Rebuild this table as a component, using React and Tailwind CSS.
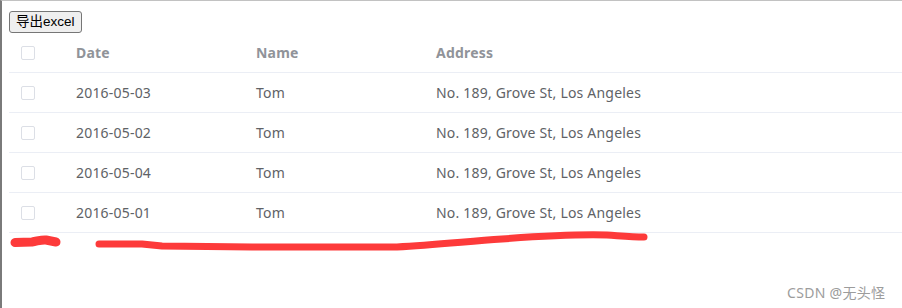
import React from "react";

const rows = [
  { date: "2016-05-03", name: "Tom", address: "No. 189, Grove St, Los Angeles" },
  { date: "2016-05-02", name: "Tom", address: "No. 189, Grove St, Los Angeles" },
  { date: "2016-05-04", name: "Tom", address: "No. 189, Grove St, Los Angeles" },
  { date: "2016-05-01", name: "Tom", address: "No. 189, Grove St, Los Angeles" },
];

function Checkbox() {
  return <span className="block w-[14px] h-[14px] border border-[#dcdfe6] rounded-[2px] bg-white" />;
}

function Row({ cells }) {
  return (
    <div className="flex h-[40px] items-center border-b border-[#ebeef5]">
      <div className="w-[55px] shrink-0 pl-[12px]">
        <Checkbox />
      </div>
      <div className="w-[180px] shrink-0 px-[12px]">{cells[0]}</div>
      <div className="w-[180px] shrink-0 px-[12px]">{cells[1]}</div>
      <div className="flex-1 px-[12px] whitespace-nowrap">{cells[2]}</div>
    </div>
  );
}

export default function App() {
  return (
    <div className="relative w-[902px] h-[308px] bg-white overflow-hidden border-l-2 border-l-[#7a7a7a] border-t border-t-[#c2c2c2] font-['Noto_Sans','Noto_Sans_CJK_SC',sans-serif]">
      <div className="pl-[7px] pt-[10px]">
        <button className="block h-[22px] px-[6px] whitespace-nowrap text-[13.5px] leading-none text-black bg-[#efefef] border border-[#767676] rounded-[3px] font-['Liberation_Sans','Noto_Sans_CJK_SC',sans-serif]">
          导出excel
        </button>
        <div className="text-[14px] tracking-[0.2px]">
          <div className="font-bold text-[#909399]">
            <Row cells={["Date", "Name", "Address"]} />
          </div>
          <div className="text-[#606266]">
            {rows.map((r, i) => (
              <Row key={i} cells={[r.date, r.name, r.address]} />
            ))}
          </div>
        </div>
      </div>

      <svg className="absolute left-0 top-0 pointer-events-none" width="902" height="308">
        <path d="M13 241.5 L 30 241 C 36 240, 40 238.5, 44 239 L 54 241" stroke="#fd3a3a" strokeWidth="9" strokeLinecap="round" strokeLinejoin="round" fill="none" />
        <path d="M97 243 L 140 243 L 160 245 L 250 246 L 395 246 C 430 244, 460 241, 500 238 C 540 235, 570 233, 605 234 C 620 235, 630 236, 642 236" stroke="#fd3a3a" strokeWidth="7" strokeLinecap="round" strokeLinejoin="round" fill="none" />
      </svg>

      <div className="absolute left-[785px] top-[281px] text-[14px] tracking-[0.3px] text-[#9c9c9c] font-['Noto_Sans','Noto_Sans_CJK_SC',sans-serif]">
        CSDN @无头怪
      </div>
    </div>
  );
}
